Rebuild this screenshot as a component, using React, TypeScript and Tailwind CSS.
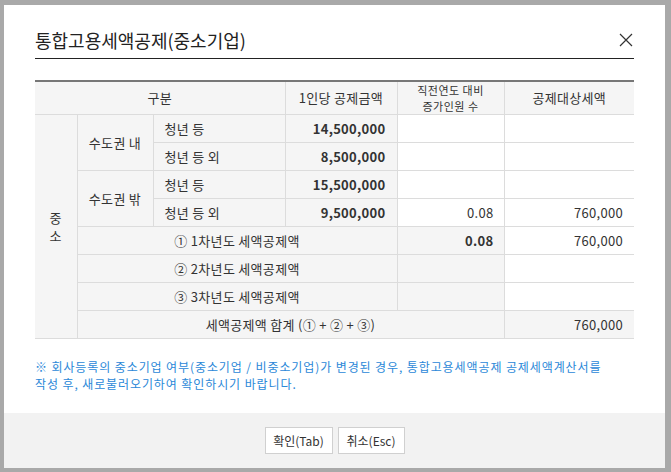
import React from "react";

const font = { fontFamily: '"Noto Sans CJK KR", "Noto Sans", sans-serif' };

const gray = "bg-[#f5f5f5]";
const cell = "border border-[#dcdcdc] text-[13px] tracking-[0.3px] text-[#333] h-[28px] p-0";

export default function App() {
  return (
    <div className="w-[671px] h-[472px] bg-[#a9a9a9] pt-[5px] pl-[4px] overflow-hidden" style={font}>
      <div className="w-[661px] h-[463px] bg-white flex flex-col">
        {/* Header */}
        <div className="mx-[31px] pt-[22px] pb-[5px] flex items-center justify-between border-b border-[#222]">
          <h1 className="text-[18px] leading-[26px] text-[#222]">통합고용세액공제(중소기업)</h1>
          <svg width="14" height="14" viewBox="0 0 14 14" className="mr-[1px]">
            <path d="M1 1L13 13M13 1L1 13" stroke="#333" strokeWidth="1.2" fill="none" />
          </svg>
        </div>

        {/* Table */}
        <div className="mx-[31px] mt-[21px] border-t-2 border-[#777]">
          <table className="w-[599px] border-collapse table-fixed">
            <colgroup>
              <col className="w-[42px]" />
              <col className="w-[76px]" />
              <col className="w-[132px]" />
              <col className="w-[112px]" />
              <col className="w-[107px]" />
              <col className="w-[130px]" />
            </colgroup>
            <thead>
              <tr className={gray}>
                <th colSpan={3} className={`${cell} border-t-0 border-l-0 h-[32px] font-normal`}>구분</th>
                <th className={`${cell} border-t-0 h-[32px] font-normal`}>1인당 공제금액</th>
                <th className={`${cell} border-t-0 h-[32px] font-normal`}>
                  <div className="text-[11px] leading-[16px] tracking-[0.5px]">직전연도 대비</div>
                  <div className="text-[11px] leading-[16px] tracking-[0.5px]">증가인원 수</div>
                </th>
                <th className={`${cell} border-t-0 border-r-0 h-[32px] font-normal`}>공제대상세액</th>
              </tr>
            </thead>
            <tbody>
              <tr>
                <td rowSpan={8} className={`${cell} ${gray} border-l-0 text-center`}>
                  <div className="leading-[18px]">중</div>
                  <div className="leading-[18px]">소</div>
                </td>
                <td rowSpan={2} className={`${cell} ${gray} text-center`}>수도권 내</td>
                <td className={`${cell} ${gray} pl-[11px]`}>청년 등</td>
                <td className={`${cell} ${gray} text-right pr-[11px] font-bold`}>14,500,000</td>
                <td className={cell}></td>
                <td className={`${cell} border-r-0`}></td>
              </tr>
              <tr>
                <td className={`${cell} ${gray} pl-[11px]`}>청년 등 외</td>
                <td className={`${cell} ${gray} text-right pr-[11px] font-bold`}>8,500,000</td>
                <td className={cell}></td>
                <td className={`${cell} border-r-0`}></td>
              </tr>
              <tr>
                <td rowSpan={2} className={`${cell} ${gray} text-center`}>수도권 밖</td>
                <td className={`${cell} ${gray} pl-[11px]`}>청년 등</td>
                <td className={`${cell} ${gray} text-right pr-[11px] font-bold`}>15,500,000</td>
                <td className={cell}></td>
                <td className={`${cell} border-r-0`}></td>
              </tr>
              <tr>
                <td className={`${cell} ${gray} pl-[11px]`}>청년 등 외</td>
                <td className={`${cell} ${gray} text-right pr-[11px] font-bold`}>9,500,000</td>
                <td className={`${cell} text-right pr-[10px]`}>0.08</td>
                <td className={`${cell} border-r-0 text-right pr-[11px]`}>760,000</td>
              </tr>
              <tr>
                <td colSpan={3} className={`${cell} ${gray} text-center`}>① 1차년도 세액공제액</td>
                <td className={`${cell} ${gray} text-right pr-[10px] font-bold`}>0.08</td>
                <td className={`${cell} border-r-0 text-right pr-[11px]`}>760,000</td>
              </tr>
              <tr>
                <td colSpan={3} className={`${cell} ${gray} text-center`}>② 2차년도 세액공제액</td>
                <td className={`${cell} ${gray}`}></td>
                <td className={`${cell} border-r-0`}></td>
              </tr>
              <tr>
                <td colSpan={3} className={`${cell} ${gray} text-center`}>③ 3차년도 세액공제액</td>
                <td className={`${cell} ${gray}`}></td>
                <td className={`${cell} border-r-0`}></td>
              </tr>
              <tr>
                <td colSpan={4} className={`${cell} ${gray} text-center`}>세액공제액 합계 (① + ② + ③)</td>
                <td className={`${cell} ${gray} border-r-0 text-right pr-[11px]`}>760,000</td>
              </tr>
            </tbody>
          </table>
        </div>

        {/* Note */}
        <div className="mx-[31px] mt-[19px] text-[12px] tracking-[0.9px] leading-[17px] text-[#2b88d8]">
          <p>※ 회사등록의 중소기업 여부(중소기업 / 비중소기업)가 변경된 경우, 통합고용세액공제 공제세액계산서를</p>
          <p>작성 후, 새로불러오기하여 확인하시기 바랍니다.</p>
        </div>

        <div className="flex-1" />

        {/* Footer */}
        <div className="h-[55px] bg-[#f2f2f2] flex items-center justify-center gap-[5px]">
          <button className="h-[27px] w-[68px] bg-white border border-[#d0d0d0] text-[12px] text-[#333]">
            확인(Tab)
          </button>
          <button className="h-[27px] w-[67px] bg-white border border-[#d0d0d0] text-[12px] text-[#333]">
            취소(Esc)
          </button>
        </div>
      </div>
    </div>
  );
}
